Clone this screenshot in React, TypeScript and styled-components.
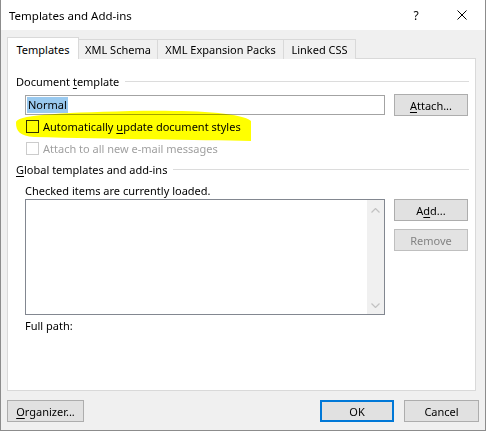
import styled, { createGlobalStyle } from "styled-components"

const GlobalStyle = createGlobalStyle`
  html, body {
    margin: 0;
    padding: 0;
    background: #ffffff;
  }
  * {
    box-sizing: border-box;
  }
`

const font = `"Noto Sans", "Open Sans", sans-serif`

const App = () => {
    return (
        <>
            <GlobalStyle />
            <Window>
                <TitleBar>
                    <Title>Templates and Add-ins</Title>
                    <TitleButtons>
                        <Help>?</Help>
                        <Close>
                            <svg width="10" height="10" viewBox="0 0 10 10">
                                <path d="M0.5 0.5 L9.5 9.5 M9.5 0.5 L0.5 9.5" stroke="#000" strokeWidth="1" fill="none" />
                            </svg>
                        </Close>
                    </TitleButtons>
                </TitleBar>
                <Body>
                    <TabStrip>
                        <Tab $active $width={72}>Templates</Tab>
                        <Tab $width={80}>XML Schema</Tab>
                        <Tab $width={127}>XML Expansion Packs</Tab>
                        <Tab $width={73}>Linked CSS</Tab>
                    </TabStrip>
                    <Panel>
                        <GroupHeader $top={14}>
                            <span>Document <U>t</U>emplate</span>
                        </GroupHeader>
                        <Indent>
                            <FieldRow>
                                <TextBox>
                                    <Selected>Normal</Selected>
                                </TextBox>
                                <Button>
                                    <U>A</U>ttach...
                                </Button>
                            </FieldRow>
                            <CheckRow $top={4}>
                                <CheckBox />
                                <span>Automatically <U>u</U>pdate document styles</span>
                            </CheckRow>
                            <CheckRow $top={9} $disabled>
                                <CheckBox $disabled />
                                <span>Attach to all new e-mail messages</span>
                            </CheckRow>
                        </Indent>
                        <GroupHeader $top={6}>
                            <span><U>G</U>lobal templates and add-ins</span>
                        </GroupHeader>
                        <Indent>
                            <Caption $top={6}>Checked items are currently loaded.</Caption>
                            <ListRow>
                                <ListBox>
                                    <ScrollBar>
                                        <svg width="9" height="5" viewBox="0 0 9 5">
                                            <path d="M0.5 4.5 L4.5 0.5 L8.5 4.5" stroke="#c2c2c2" strokeWidth="1.2" fill="none" />
                                        </svg>
                                        <svg width="9" height="5" viewBox="0 0 9 5">
                                            <path d="M0.5 0.5 L4.5 4.5 L8.5 0.5" stroke="#c2c2c2" strokeWidth="1.2" fill="none" />
                                        </svg>
                                    </ScrollBar>
                                </ListBox>
                                <ButtonColumn>
                                    <Button>
                                        A<U>d</U>d...
                                    </Button>
                                    <Button $disabled>Remove</Button>
                                </ButtonColumn>
                            </ListRow>
                            <Caption $top={3}>Full path:</Caption>
                        </Indent>
                    </Panel>
                    <Footer>
                        <Button $width={77}>
                            <U>O</U>rganizer...
                        </Button>
                        <FooterRight>
                            <Button $width={74} $default>OK</Button>
                            <Button $width={75}>Cancel</Button>
                        </FooterRight>
                    </Footer>
                </Body>
                <Marker width="489" height="431" viewBox="0 0 489 431">
                    <path
                        d="M16 123 C15 115, 55 113, 130 111 C190 110, 240 112, 251 121 L251 141 C200 140, 110 139, 34 137 C20 136, 16 131, 16 123 Z"
                        fill="#ffff00"
                    />
                </Marker>
            </Window>
        </>
    )
}

export default App

const Window = styled.div`
    position: relative;
    width: 486px;
    height: 431px;
    display: flex;
    flex-direction: column;
    background: #f0f0f0;
    border-left: 1px solid #8c8c8c;
    border-right: 1px solid #8c8c8c;
    border-bottom: 1px solid #8c8c8c;
    font-family: ${font};
    font-size: 11px;
    color: #000;
`

const TitleBar = styled.div`
    height: 30px;
    flex: none;
    background: #ffffff;
    display: flex;
    align-items: center;
    justify-content: space-between;
    padding-left: 8px;
`

const Title = styled.div`
    font-size: 11.5px;
`

const TitleButtons = styled.div`
    display: flex;
    align-items: center;
    height: 100%;
`

const Help = styled.div`
    width: 46px;
    text-align: center;
    font-size: 12px;
`

const Close = styled.div`
    width: 46px;
    height: 100%;
    display: flex;
    align-items: center;
    justify-content: center;
`

const Body = styled.div`
    flex: 1;
    display: flex;
    flex-direction: column;
    padding: 7px 9px 0 6px;
`

const TabStrip = styled.div`
    display: flex;
    align-items: flex-end;
    height: 22px;
    margin-bottom: -1px;
    flex: none;
`

const Tab = styled.div<{ $active?: boolean; $width: number }>`
    position: relative;
    width: ${p => p.$width}px;
    height: ${p => (p.$active ? 22 : 20)}px;
    margin-left: ${p => (p.$active ? 0 : -1)}px;
    padding-top: ${p => (p.$active ? 2 : 0)}px;
    display: flex;
    align-items: center;
    justify-content: center;
    background: ${p => (p.$active ? "#ffffff" : "#f0f0f0")};
    border: 1px solid #d9d9d9;
    border-bottom: none;
    z-index: ${p => (p.$active ? 1 : 0)};
    white-space: nowrap;
`

const Panel = styled.div`
    flex: 1;
    background: #ffffff;
    border: 1px solid #d9d9d9;
    padding: 0 6px 0 8px;
    display: flex;
    flex-direction: column;
`

const GroupHeader = styled.div<{ $top: number }>`
    display: flex;
    align-items: center;
    height: 16px;
    margin-top: ${p => p.$top}px;
    gap: 6px;
    white-space: nowrap;

    &::after {
        content: "";
        flex: 1;
        height: 1px;
        margin-top: 1px;
        background: #dcdcdc;
    }
`

const U = styled.span`
    text-decoration: underline;
    text-underline-offset: 2px;
`

const Indent = styled.div`
    padding-left: 9px;
    display: flex;
    flex-direction: column;
`

const FieldRow = styled.div`
    display: flex;
    align-items: center;
    gap: 9px;
    margin-top: 5px;
    height: 22px;
`

const TextBox = styled.div`
    width: 360px;
    height: 20px;
    border: 1px solid #a3a3a3;
    background: #ffffff;
    display: flex;
    align-items: center;
    padding-left: 1px;
`

const Selected = styled.span`
    background: #99c9ef;
    color: #000;
    padding: 0 1px;
    line-height: 16px;
`

const Button = styled.div<{ $width?: number; $disabled?: boolean; $default?: boolean }>`
    width: ${p => p.$width ?? 74}px;
    height: 22px;
    display: flex;
    align-items: center;
    justify-content: center;
    background: #e1e1e1;
    border: ${p => (p.$default ? "2px solid #0078d7" : "1px solid #adadad")};
    color: ${p => (p.$disabled ? "#838383" : "#000")};
    ${p => (p.$disabled ? "border-color: #bfbfbf; background: #e3e3e3;" : "")}
    white-space: nowrap;
`

const CheckRow = styled.div<{ $top: number; $disabled?: boolean }>`
    display: flex;
    align-items: center;
    gap: 4px;
    height: 13px;
    margin-top: ${p => p.$top}px;
    padding-left: 1px;
    color: ${p => (p.$disabled ? "#a0a0a0" : "#000")};
    white-space: nowrap;
`

const CheckBox = styled.div<{ $disabled?: boolean }>`
    width: 13px;
    height: 13px;
    flex: none;
    border: 1px solid ${p => (p.$disabled ? "#cccccc" : "#333333")};
    background: #ffffff;
`

const Caption = styled.div<{ $top: number }>`
    height: 14px;
    display: flex;
    align-items: center;
    margin-top: ${p => p.$top}px;
`

const ListRow = styled.div`
    display: flex;
    align-items: flex-start;
    gap: 9px;
    margin-top: 2px;
`

const ListBox = styled.div`
    width: 360px;
    height: 116px;
    border: 1px solid #828790;
    background: #ffffff;
    display: flex;
    justify-content: flex-end;
`

const ScrollBar = styled.div`
    width: 17px;
    height: 100%;
    background: #f0f0f0;
    display: flex;
    flex-direction: column;
    align-items: center;
    justify-content: space-between;
    padding: 8px 0 6px;
`

const ButtonColumn = styled.div`
    display: flex;
    flex-direction: column;
    gap: 8px;
`

const Footer = styled.div`
    height: 39px;
    flex: none;
    display: flex;
    align-items: flex-start;
    justify-content: space-between;
    padding: 9px 1px 0 0;
`

const FooterRight = styled.div`
    display: flex;
    gap: 10px;
    margin-right: -4px;
`

const Marker = styled.svg`
    position: absolute;
    left: -1px;
    top: 0;
    pointer-events: none;
    mix-blend-mode: multiply;
`
